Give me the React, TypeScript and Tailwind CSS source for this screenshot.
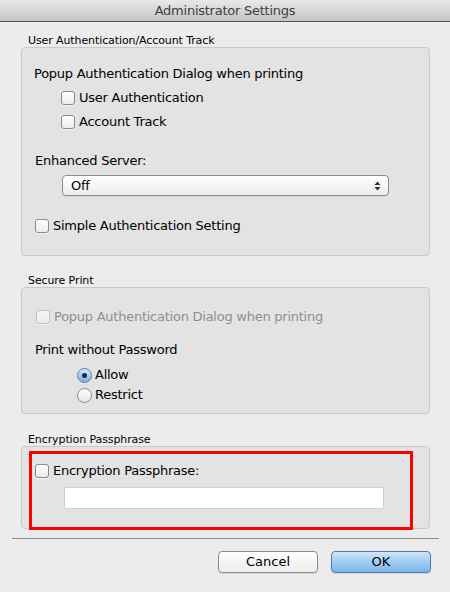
import React from "react";

const font = { fontFamily: '"DejaVu Sans", "Liberation Sans", sans-serif' };

const Checkbox: React.FC<{ label: string; disabled?: boolean; className?: string }> = ({
  label,
  disabled,
  className,
}) => (
  <div className={`flex h-[16px] items-center ${className ?? ""}`}>
    <span
      className={`h-[14px] w-[14px] shrink-0 rounded-[3px] border bg-gradient-to-b shadow-[0_1px_0_rgba(255,255,255,0.6)] ${
        disabled
          ? "border-[#c2c2c2] from-[#f4f4f4] to-[#ececec]"
          : "border-[#8a8a8a] from-[#ffffff] to-[#ececec]"
      }`}
    />
    <span
      className={`ml-[4px] text-[13px] leading-[16px] tracking-[-0.25px] ${
        disabled ? "text-[#8f8f8f]" : "text-black"
      }`}
    >
      {label}
    </span>
  </div>
);

const Radio: React.FC<{ label: string; checked?: boolean; className?: string }> = ({
  label,
  checked,
  className,
}) => (
  <div className={`flex h-[16px] items-center ${className ?? ""}`}>
    {checked ? (
      <span className="flex h-[15px] w-[15px] shrink-0 items-center justify-center rounded-full border border-[#5d7fa8] bg-gradient-to-b from-[#d4e8fa] to-[#78b2e8]">
        <span className="h-[5px] w-[5px] rounded-full bg-[#1b2a3a]" />
      </span>
    ) : (
      <span className="h-[15px] w-[15px] shrink-0 rounded-full border border-[#8a8a8a] bg-gradient-to-b from-[#ffffff] to-[#e6e6e6]" />
    )}
    <span className="ml-[3px] text-[13px] leading-[16px] tracking-[-0.25px] text-black">{label}</span>
  </div>
);

const GroupLabel: React.FC<{ text: string; className?: string }> = ({ text, className }) => (
  <div className={`ml-[28px] h-[13px] text-[11px] leading-[13px] tracking-[-0.1px] text-black ${className ?? ""}`}>
    {text}
  </div>
);

const App: React.FC = () => {
  return (
    <div className="flex h-[592px] w-[450px] flex-col bg-[#ececec]" style={font}>
      <div className="flex h-[22px] items-center justify-center border-b border-[#555555] bg-gradient-to-b from-[#e9e9e9] to-[#c4c4c4] text-[13px] tracking-[-0.25px] text-[#404040]">
        Administrator Settings
      </div>

      <GroupLabel text="User Authentication/Account Track" className="mt-[12px]" />
      <div className="ml-[21px] h-[209px] w-[409px] rounded-[4px] border border-[#c9c9c9] bg-[#e3e3e3] pt-[18px]">
        <div className="ml-[12px] text-[13px] leading-[16px] tracking-[-0.25px] text-black">
          Popup Authentication Dialog when printing
        </div>
        <Checkbox label="User Authentication" className="ml-[39px] mt-[8px]" />
        <Checkbox label="Account Track" className="ml-[39px] mt-[8px]" />
        <div className="ml-[13px] mt-[23px] text-[13px] leading-[16px] tracking-[-0.25px] text-black">
          Enhanced Server:
        </div>
        <div className="relative ml-[40px] mt-[6px] flex h-[21px] w-[327px] items-center rounded-[4px] border border-[#8e8e8e] bg-gradient-to-b from-[#ffffff] to-[#ededed] pl-[8px] text-[13px] tracking-[-0.25px] text-black shadow-[0_1px_1px_rgba(0,0,0,0.08)]">
          Off
          <svg className="absolute right-[7px] top-[5px]" width="7" height="10" viewBox="0 0 7 10">
            <path d="M3.5 0.5 L6.5 4 L0.5 4 Z" fill="#333" />
            <path d="M3.5 9.5 L6.5 6 L0.5 6 Z" fill="#333" />
          </svg>
        </div>
        <Checkbox label="Simple Authentication Setting" className="ml-[13px] mt-[22px]" />
      </div>

      <GroupLabel text="Secure Print" className="mt-[18px]" />
      <div className="ml-[21px] h-[127px] w-[409px] rounded-[4px] border border-[#c9c9c9] bg-[#e3e3e3] pt-[21px]">
        <Checkbox label="Popup Authentication Dialog when printing" disabled className="ml-[14px]" />
        <div className="ml-[13px] mt-[17px] text-[13px] leading-[16px] tracking-[-0.25px] text-black">
          Print without Password
        </div>
        <Radio label="Allow" checked className="ml-[55px] mt-[9px]" />
        <Radio label="Restrict" className="ml-[55px] mt-[4px]" />
      </div>

      <GroupLabel text="Encryption Passphrase" className="mt-[19px]" />
      <div className="relative ml-[21px] h-[83px] w-[409px] rounded-[4px] border border-[#c9c9c9] bg-[#e3e3e3] pt-[16px]">
        <Checkbox label="Encryption Passphrase:" className="ml-[13px]" />
        <div className="ml-[42px] mt-[8px] h-[22px] w-[320px] border border-[#d0d0d0] bg-white" />
        <div className="absolute left-[7px] top-[4px] h-[79px] w-[384px] border-[3px] border-[#ff0000]" />
      </div>

      <div className="ml-[12px] mt-[9px] h-px w-[427px] bg-[#8c8c8c]" />

      <div className="mt-[12px] flex justify-end gap-[13px] pr-[19px]">
        <div className="flex h-[22px] w-[100px] items-center justify-center rounded-[4px] border border-[#8c8c8c] bg-gradient-to-b from-[#ffffff] to-[#ececec] text-[13px] text-black shadow-[0_1px_1px_rgba(0,0,0,0.1)]">
          Cancel
        </div>
        <div className="flex h-[22px] w-[100px] items-center justify-center rounded-[4px] border border-[#5a7ba6] bg-gradient-to-b from-[#d2e7fa] via-[#9fcbf3] to-[#7cb7ec] text-[13px] text-black shadow-[0_1px_1px_rgba(0,0,0,0.1)]">
          OK
        </div>
      </div>
    </div>
  );
};

export default App;
